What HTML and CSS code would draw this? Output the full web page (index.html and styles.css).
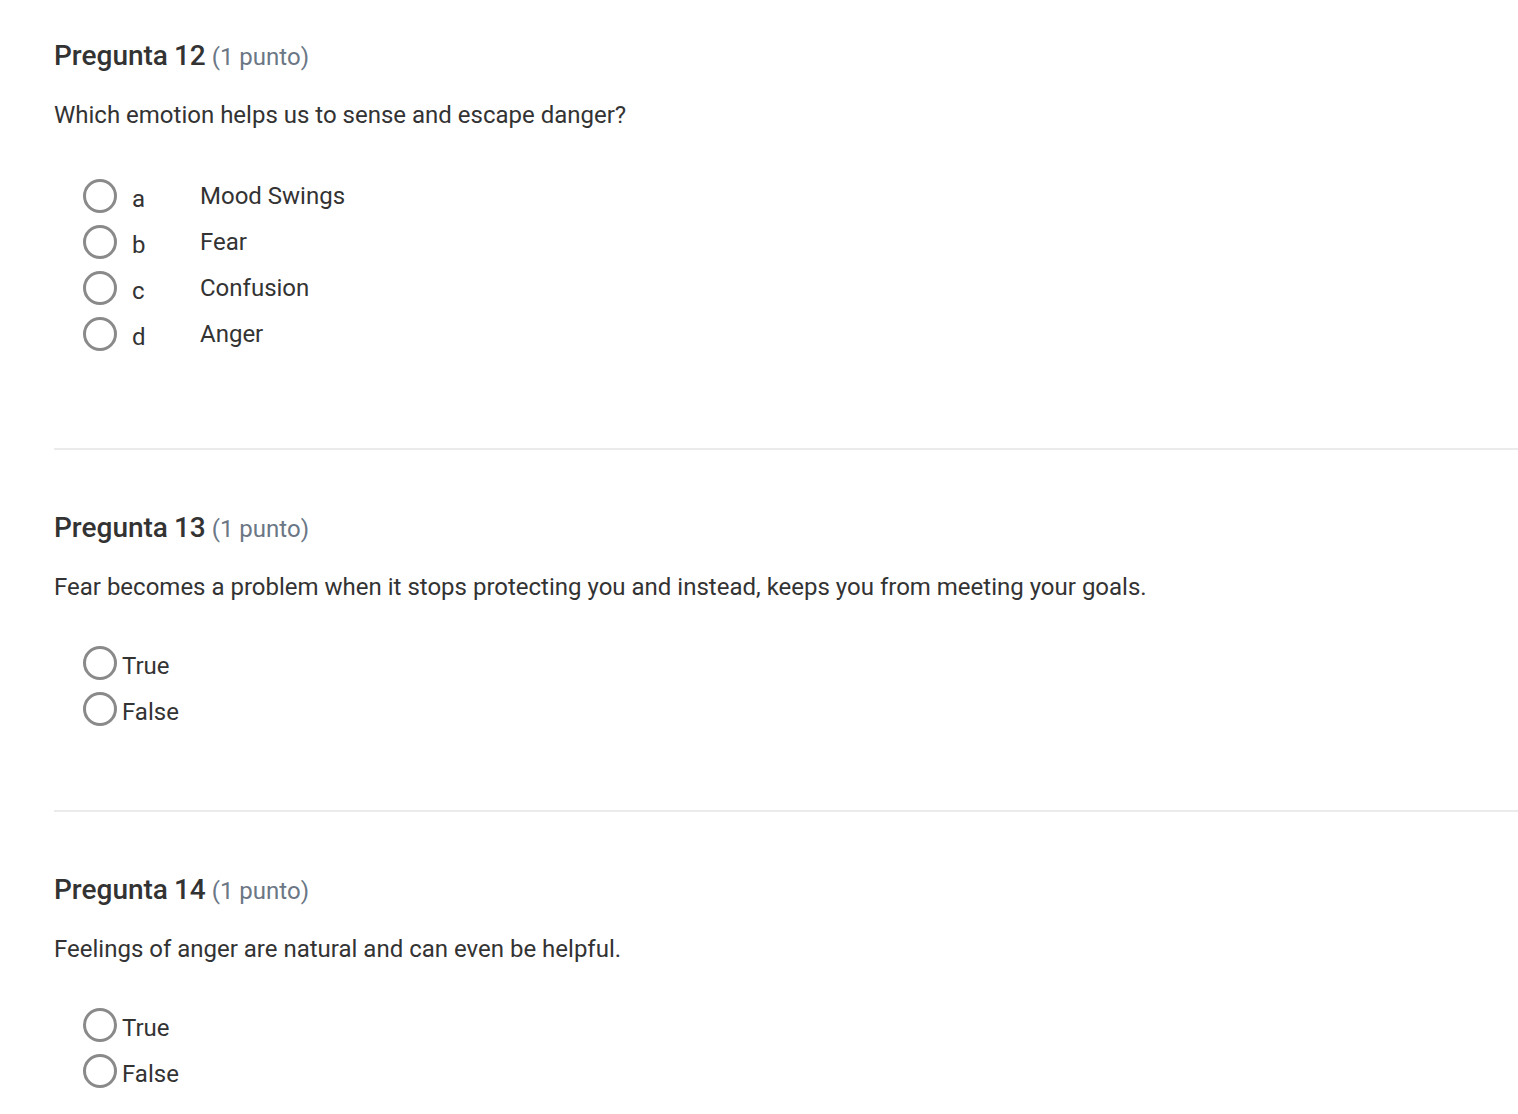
FILE: index.html
```html
<!DOCTYPE html>
<html>
<head>
<meta charset="utf-8">
<link rel="stylesheet" href="styles.css">
</head>
<body>
<div class="page">
  <section class="question">
    <h2 class="q-title">Pregunta 12 <span class="points">(1 punto)</span></h2>
    <p class="q-text">Which emotion helps us to sense and escape danger?</p>
    <div class="options lettered">
      <label class="opt"><span class="radio"></span><span class="letter">a</span><span class="label">Mood Swings</span></label>
      <label class="opt"><span class="radio"></span><span class="letter">b</span><span class="label">Fear</span></label>
      <label class="opt"><span class="radio"></span><span class="letter">c</span><span class="label">Confusion</span></label>
      <label class="opt"><span class="radio"></span><span class="letter">d</span><span class="label">Anger</span></label>
    </div>
  </section>
  <hr class="divider">
  <section class="question">
    <h2 class="q-title">Pregunta 13 <span class="points">(1 punto)</span></h2>
    <p class="q-text">Fear becomes a problem when it stops protecting you and instead, keeps you from meeting your goals.</p>
    <div class="options tf">
      <label class="opt"><span class="radio"></span><span class="label">True</span></label>
      <label class="opt"><span class="radio"></span><span class="label">False</span></label>
    </div>
  </section>
  <hr class="divider">
  <section class="question last">
    <h2 class="q-title">Pregunta 14 <span class="points">(1 punto)</span></h2>
    <p class="q-text">Feelings of anger are natural and can even be helpful.</p>
    <div class="options tf">
      <label class="opt"><span class="radio"></span><span class="label">True</span></label>
      <label class="opt"><span class="radio"></span><span class="label">False</span></label>
    </div>
  </section>
</div>
</body>
</html>
```
FILE: styles.css
```css
html, body {
  margin: 0;
  padding: 0;
  background: #ffffff;
}
body {
  font-family: Roboto, "Liberation Sans", Arial, sans-serif;
  color: #333333;
}
.page {
  padding: 38px 0 0 54px;
}
.question {
  display: flex;
  flex-direction: column;
}
.q-title {
  margin: 0;
  font-size: 28px;
  line-height: 36px;
  font-weight: 500;
  color: #333333;
  word-spacing: -1px;
}
.points {
  font-size: 24px;
  font-weight: 400;
  color: #6b7785;
  word-spacing: 0;
}
.q-text {
  margin: 25px 0 0 0;
  font-size: 24px;
  line-height: 30px;
  color: #333333;
}
.options {
  display: flex;
  flex-direction: column;
  gap: 12px;
  padding-left: 29px;
}
.lettered {
  margin-top: 49px;
  margin-bottom: 97px;
}
.tf {
  margin-top: 44px;
  margin-bottom: 84px;
}
.last .tf {
  margin-bottom: 20px;
}
.opt {
  display: flex;
  align-items: center;
  height: 34px;
  font-size: 24px;
}
.radio {
  width: 28px;
  height: 28px;
  border: 3px solid #8a8a8a;
  border-radius: 50%;
  flex: none;
}
.letter {
  width: 83px;
  padding-left: 15px;
  box-sizing: border-box;
  margin-top: 6px;
  flex: none;
}
.tf .label {
  margin-left: 5px;
  margin-top: 6px;
}
.divider {
  border: 0;
  height: 2px;
  background: #ebebeb;
  margin: 0;
}
.divider + .question {
  margin-top: 60px;
}
```
